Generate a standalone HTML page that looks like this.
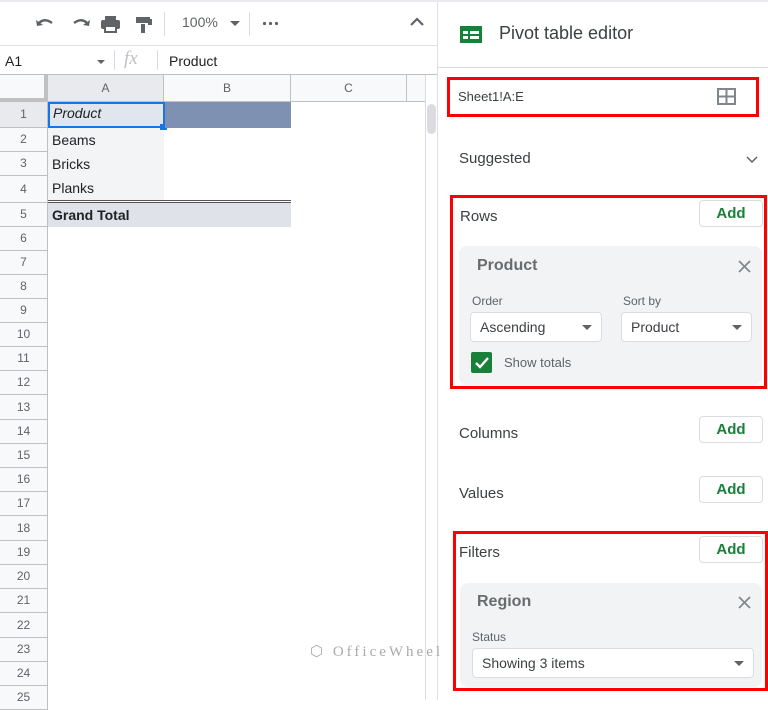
<!DOCTYPE html>
<html><head><style>
*{box-sizing:border-box;margin:0;padding:0}
body{width:768px;height:700px;overflow:hidden;background:#fff;font-family:"Liberation Sans",Arial,sans-serif;position:relative;color:#202124}
.a{position:absolute}
.rh{position:absolute;left:0;width:48px;background:#f8f9fa;border-bottom:1px solid #c0c0c0;border-right:1px solid #c0c0c0;font-size:12px;color:#5f6368;text-align:center}
.red{position:absolute;border:3px solid #f00}
.add{position:absolute;width:64px;height:27px;border:1px solid #dadce0;border-radius:4px;color:#188038;font-size:15px;font-weight:bold;text-align:center;line-height:25px;background:#fff}
.lbl{position:absolute;font-size:15px;color:#3c4043}
.card{position:absolute;background:#f1f3f4;border-radius:8px}
.sel{position:absolute;background:#fff;border:1px solid #dadce0;border-radius:4px;font-size:14px;color:#3c4043;padding-left:9px}
.tri{position:absolute;right:9px;top:12px;width:0;height:0;border-left:5px solid transparent;border-right:5px solid transparent;border-top:5px solid #5f6368}
</style></head><body>
<div class="a" style="left:0;top:0;width:437px;height:46px;border-top:2px solid #e8eaed;border-bottom:1px solid #e0e0e0"></div>
<svg class="a" style="left:34px;top:14px" width="130" height="20" viewBox="0 0 130 20">
<path d="M4 10 Q10 3 18 9" stroke="#5f6368" stroke-width="2.4" fill="none"/><path d="M2 6 L3 12 L9 11Z" fill="#5f6368"/>
<path d="M54 10 Q48 3 40 9" stroke="#5f6368" stroke-width="2.4" fill="none"/><path d="M56 6 L55 12 L49 11Z" fill="#5f6368"/>
<rect x="67" y="6" width="19" height="9" rx="2" fill="#5f6368"/><rect x="71" y="2" width="11" height="4" fill="#5f6368"/><rect x="71" y="12" width="11" height="6" fill="#fff" stroke="#5f6368" stroke-width="2"/>
<rect x="102" y="3" width="14" height="6" fill="#5f6368"/><rect x="114" y="5" width="4" height="6" fill="#5f6368"/><rect x="107" y="10" width="4" height="9" fill="#5f6368"/>
</svg>
<div class="a" style="left:164px;top:12px;width:1px;height:24px;background:#dadce0"></div>
<div class="a" style="left:182px;top:14px;font-size:14px;color:#5f6368">100%</div>
<div class="a" style="left:230px;top:21px;border-left:5px solid transparent;border-right:5px solid transparent;border-top:5px solid #5f6368"></div>
<div class="a" style="left:249px;top:12px;width:1px;height:24px;background:#dadce0"></div>
<svg class="a" style="left:262px;top:21px" width="18" height="5"><circle cx="2.5" cy="2.5" r="1.6" fill="#5f6368"/><circle cx="8.5" cy="2.5" r="1.6" fill="#5f6368"/><circle cx="14.5" cy="2.5" r="1.6" fill="#5f6368"/></svg>
<svg class="a" style="left:410px;top:17px" width="14" height="10"><path d="M1 8 L7 2 L13 8" stroke="#5f6368" stroke-width="2.2" fill="none"/></svg>
<div class="a" style="left:0;top:46px;width:437px;height:29px;border-bottom:1px solid #c0c0c0"></div>
<div class="a" style="left:5px;top:53px;font-size:14px">A1</div>
<div class="a" style="left:97px;top:60px;border-left:4px solid transparent;border-right:4px solid transparent;border-top:4px solid #5f6368"></div>
<div class="a" style="left:114px;top:50px;width:1px;height:20px;background:#dadce0"></div>
<div class="a" style="left:124px;top:48px;font-size:19px;font-style:italic;color:#bdc1c6;font-family:'Liberation Serif',serif">fx</div>
<div class="a" style="left:157px;top:50px;width:1px;height:20px;background:#dadce0"></div>
<div class="a" style="left:169px;top:53px;font-size:14px">Product</div>
<div class="a" style="left:0;top:75px;width:48px;height:27px;background:#f8f9fa;border-right:4px solid #c0c0c0;border-bottom:4px solid #c0c0c0"></div>
<div class="a" style="left:48px;top:75px;width:116px;height:27px;background:#e8eaed;border-right:1px solid #c0c0c0;border-bottom:1px solid #c0c0c0;font-size:12px;color:#5f6368;text-align:center;line-height:26px">A</div>
<div class="a" style="left:164px;top:75px;width:127px;height:27px;background:#f8f9fa;border-right:1px solid #c0c0c0;border-bottom:1px solid #c0c0c0;font-size:12px;color:#5f6368;text-align:center;line-height:26px">B</div>
<div class="a" style="left:291px;top:75px;width:116px;height:27px;background:#f8f9fa;border-right:1px solid #c0c0c0;border-bottom:1px solid #c0c0c0;font-size:12px;color:#5f6368;text-align:center;line-height:26px">C</div>
<div class="a" style="left:407px;top:75px;width:18px;height:27px;background:#f8f9fa;border-bottom:1px solid #c0c0c0"></div>
<div class="a" style="left:425px;top:75px;width:12px;height:625px;background:#fff;border-left:1px solid #dadce0"></div>
<div class="a" style="left:427px;top:104px;width:9px;height:30px;background:#dadce0;border-radius:5px"></div>
<div class="rh" style="top:102px;height:26px;line-height:25px;background:#e8eaed">1</div>
<div class="rh" style="top:128px;height:24px;line-height:23px">2</div>
<div class="rh" style="top:152px;height:24px;line-height:23px">3</div>
<div class="rh" style="top:176px;height:27px;line-height:26px">4</div>
<div class="rh" style="top:203px;height:24px;line-height:23px">5</div>
<div class="rh" style="top:227px;height:24px;line-height:23px">6</div>
<div class="rh" style="top:251px;height:24px;line-height:23px">7</div>
<div class="rh" style="top:275px;height:24px;line-height:23px">8</div>
<div class="rh" style="top:299px;height:24px;line-height:23px">9</div>
<div class="rh" style="top:323px;height:24px;line-height:23px">10</div>
<div class="rh" style="top:347px;height:24px;line-height:23px">11</div>
<div class="rh" style="top:371px;height:24px;line-height:23px">12</div>
<div class="rh" style="top:395px;height:25px;line-height:24px">13</div>
<div class="rh" style="top:420px;height:24px;line-height:23px">14</div>
<div class="rh" style="top:444px;height:24px;line-height:23px">15</div>
<div class="rh" style="top:468px;height:24px;line-height:23px">16</div>
<div class="rh" style="top:492px;height:24px;line-height:23px">17</div>
<div class="rh" style="top:516px;height:25px;line-height:24px">18</div>
<div class="rh" style="top:541px;height:24px;line-height:23px">19</div>
<div class="rh" style="top:565px;height:24px;line-height:23px">20</div>
<div class="rh" style="top:589px;height:24px;line-height:23px">21</div>
<div class="rh" style="top:613px;height:25px;line-height:24px">22</div>
<div class="rh" style="top:638px;height:24px;line-height:23px">23</div>
<div class="rh" style="top:662px;height:24px;line-height:23px">24</div>
<div class="rh" style="top:686px;height:24px;line-height:23px">25</div>
<div class="a" style="left:48px;top:102px;width:116px;height:98px;background:#f3f4f6"></div>
<div class="a" style="left:48px;top:102px;width:117px;height:26px;background:#e1e5ed;border:2px solid #1a73e8"></div>
<div class="a" style="left:160px;top:124px;width:7px;height:6px;background:#1a73e8"></div>
<div class="a" style="left:165px;top:102px;width:126px;height:26px;background:#7f91b2"></div>
<div class="a" style="left:53px;top:105px;font-size:14px;font-style:italic">Product</div>
<div class="a" style="left:52px;top:132px;font-size:14px">Beams</div>
<div class="a" style="left:52px;top:156px;font-size:14px">Bricks</div>
<div class="a" style="left:52px;top:180px;font-size:14px">Planks</div>
<div class="a" style="left:48px;top:200px;width:243px;height:3px;border-top:1px solid #555;border-bottom:1px solid #555"></div>
<div class="a" style="left:48px;top:203px;width:243px;height:24px;background:#dfe2e8"></div>
<div class="a" style="left:52px;top:207px;font-size:14px;font-weight:bold">Grand Total</div>
<div class="a" style="left:437px;top:0;width:331px;height:700px;background:#fff;border-left:1px solid #e0e0e0"></div>
<div class="a" style="left:310px;top:642px;font-size:15px;color:#aaa;letter-spacing:3px;font-family:'Liberation Serif',serif;white-space:nowrap">⬡ OfficeWheel</div>
<div class="a" style="left:437px;top:0;width:331px;height:2px;background:#e8eaed"></div>
<svg class="a" style="left:460px;top:26px" width="22" height="17"><rect x="0" y="0" width="22" height="17" fill="#188038"/><rect x="3" y="5" width="16" height="3" fill="#fff"/><rect x="3" y="10" width="16" height="3" fill="#fff"/><rect x="8" y="5" width="2" height="9" fill="#188038"/></svg>
<div class="a" style="left:499px;top:23px;font-size:18px;color:#3c4043">Pivot table editor</div>
<div class="a" style="left:437px;top:67px;width:331px;height:1px;background:#dadce0"></div>
<div class="red" style="left:447px;top:77px;width:312px;height:40px"></div>
<div class="a" style="left:458px;top:89px;font-size:13px;color:#3c4043">Sheet1!A:E</div>
<svg class="a" style="left:717px;top:88px" width="19" height="17"><rect x="1" y="1" width="17" height="15" fill="none" stroke="#80868b" stroke-width="2"/><path d="M9.5 1V16M1 8.5H18" stroke="#80868b" stroke-width="2"/></svg>
<div class="lbl" style="left:459px;top:150px">Suggested</div>
<svg class="a" style="left:746px;top:156px" width="12" height="8"><path d="M1 1L6 6L11 1" stroke="#5f6368" stroke-width="1.5" fill="none"/></svg>
<div class="red" style="left:450px;top:195px;width:317px;height:194px"></div>
<div class="lbl" style="left:460px;top:208px">Rows</div>
<div class="add" style="left:699px;top:200px">Add</div>
<div class="card" style="left:459px;top:246px;width:303px;height:139px"></div>
<div class="a" style="left:477px;top:257px;font-size:16px;color:#3c4043;font-weight:bold;opacity:.75">Product</div>
<svg class="a" style="left:738px;top:260px" width="13" height="13"><path d="M1 1L12 12M12 1L1 12" stroke="#80868b" stroke-width="1.6"/></svg>
<div class="a" style="left:472px;top:294px;font-size:12px;color:#5f6368">Order</div>
<div class="a" style="left:623px;top:294px;font-size:12px;color:#5f6368">Sort by</div>
<div class="sel" style="left:470px;top:312px;width:132px;height:30px;line-height:28px">Ascending<div class="tri"></div></div>
<div class="sel" style="left:621px;top:312px;width:131px;height:30px;line-height:28px">Product<div class="tri"></div></div>
<div class="a" style="left:471px;top:352px;width:21px;height:21px;background:#188038;border-radius:2px"></div>
<svg class="a" style="left:474px;top:356px" width="16" height="13"><path d="M2 7L6 11L14 2" stroke="#fff" stroke-width="2.4" fill="none"/></svg>
<div class="a" style="left:504px;top:355px;font-size:13px;color:#5f6368">Show totals</div>
<div class="lbl" style="left:459px;top:425px">Columns</div>
<div class="add" style="left:699px;top:416px">Add</div>
<div class="lbl" style="left:459px;top:485px">Values</div>
<div class="add" style="left:699px;top:476px">Add</div>
<div class="red" style="left:453px;top:531px;width:315px;height:160px"></div>
<div class="lbl" style="left:459px;top:544px">Filters</div>
<div class="add" style="left:699px;top:536px">Add</div>
<div class="card" style="left:460px;top:583px;width:302px;height:104px"></div>
<div class="a" style="left:477px;top:593px;font-size:16px;color:#3c4043;font-weight:bold;opacity:.75">Region</div>
<svg class="a" style="left:738px;top:596px" width="13" height="13"><path d="M1 1L12 12M12 1L1 12" stroke="#80868b" stroke-width="1.6"/></svg>
<div class="a" style="left:472px;top:630px;font-size:12px;color:#5f6368">Status</div>
<div class="sel" style="left:472px;top:648px;width:282px;height:30px;line-height:28px">Showing 3 items<div class="tri"></div></div>
</body></html>
